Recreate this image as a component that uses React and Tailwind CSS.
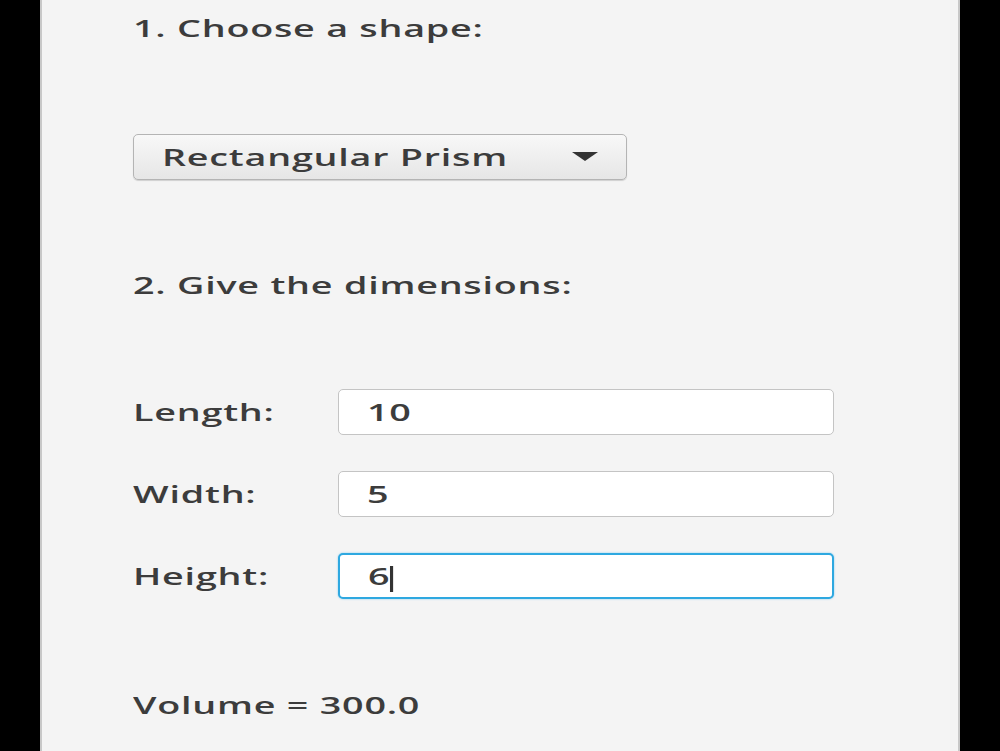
function T({ children }) {
  // the capture is stretched sideways, so the text is too
  return <span className="inline-block origin-left scale-x-[1.57] whitespace-nowrap">{children}</span>;
}

export default function App() {
  const fields = [
    { label: "Length:", value: "10" },
    { label: "Width:", value: "5" },
    { label: "Height:", value: "6", focused: true },
  ];

  return (
    <div className="w-[1000px] h-[751px] bg-black flex overflow-hidden">
      <div
        className="ml-[40px] w-[920px] h-full bg-[#f4f4f4] border-l-2 border-r-2 border-[#c8c8c8] pl-[91px] text-[#3c3c3c] text-[24px] font-semibold tracking-[0.5px]"
        style={{ fontFamily: '"Open Sans", sans-serif' }}
      >
        <div className="pt-[12px] h-[50px] leading-[32px]">
          <T>1. Choose a shape:</T>
        </div>

        <div className="mt-[84px] w-[494px] h-[46px] rounded-[5px] border border-[#b4b4b4] bg-gradient-to-b from-[#f8f8f8] to-[#e6e6e6] shadow-[0_1px_1px_rgba(0,0,0,0.15)] flex items-center justify-between pl-[28px] pr-[28px]">
          <T>Rectangular Prism</T>
          <svg width="26" height="10" viewBox="0 0 26 10">
            <polygon points="0,0 26,0 13,9" fill="#333" />
          </svg>
        </div>

        <div className="mt-[89px] leading-[32px]">
          <T>2. Give the dimensions:</T>
        </div>

        <div className="mt-[88px] flex flex-col gap-[36px]">
          {fields.map((f) => (
            <div key={f.label} className="flex items-center h-[46px]">
              <span className="w-[205px]">
                <T>{f.label}</T>
              </span>
              <div
                className={
                  "w-[496px] h-[46px] rounded-[5px] bg-white flex items-center pl-[28px] " +
                  (f.focused
                    ? "border-2 border-[#2ea8e0] shadow-[0_0_2px_#7cc8ee]"
                    : "border border-[#c4c4c4]")
                }
              >
                <T>
                  {f.value}
                  {f.focused && <span className="inline-block align-middle w-[1.5px] h-[26px] bg-[#333]" />}
                </T>
              </div>
            </div>
          ))}
        </div>

        <div className="mt-[90px] leading-[32px]">
          <T>Volume = 300.0</T>
        </div>
      </div>
    </div>
  );
}
